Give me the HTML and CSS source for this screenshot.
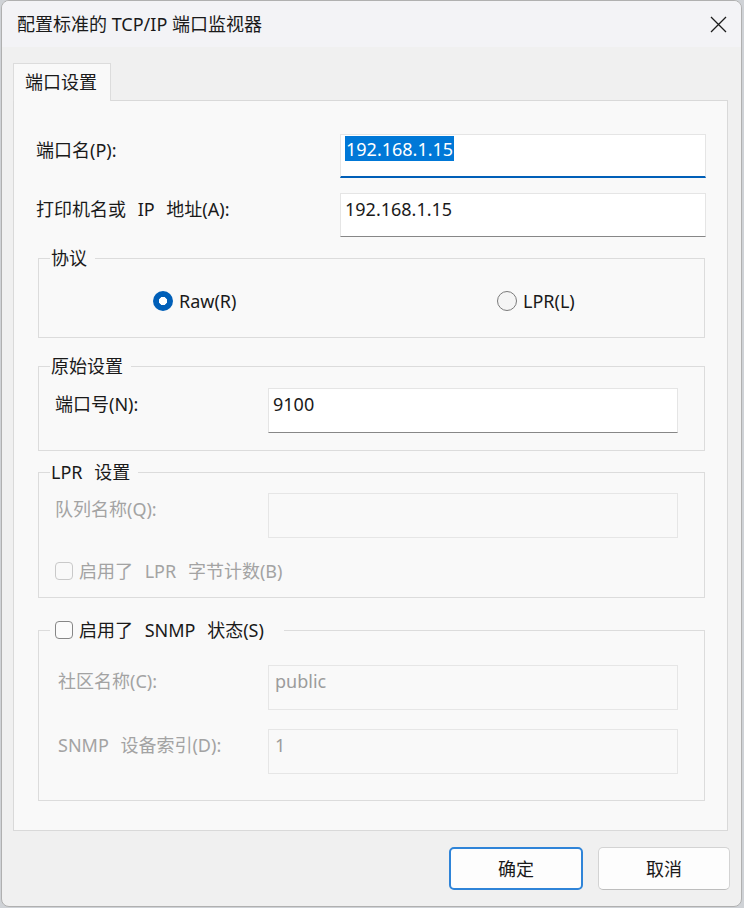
FILE: index.html
```html
<!DOCTYPE html>
<html lang="zh-CN">
<head>
<meta charset="utf-8">
<title>配置标准的 TCP/IP 端口监视器</title>
<link rel="stylesheet" href="styles.css">
</head>
<body>
<div class="window">
  <div class="titlebar">
    <span class="title">配置标准的 TCP/IP 端口监视器</span>
    <svg class="close" viewBox="0 0 17 17" aria-hidden="true">
      <path d="M1 1 L16 16 M16 1 L1 16" stroke="#1c1c1c" stroke-width="1.3" fill="none"/>
    </svg>
  </div>
  <div class="content">
    <div class="tab">端口设置</div>
    <div class="panel">
      <div class="row">
        <div class="row-label">端口名(P):</div>
        <div class="field focused"><span class="sel">192.168.1.15</span></div>
      </div>
      <div class="row row2">
        <div class="row-label">打印机名或 IP 地址(A):</div>
        <div class="field">192.168.1.15</div>
      </div>

      <fieldset class="group proto">
        <legend>协议</legend>
        <div class="radios">
          <div class="opt"><span class="radio checked"></span><span>Raw(R)</span></div>
          <div class="opt"><span class="radio"></span><span>LPR(L)</span></div>
        </div>
      </fieldset>

      <fieldset class="group raw">
        <legend>原始设置</legend>
        <div class="grow">
          <div class="glabel">端口号(N):</div>
          <div class="field">9100</div>
        </div>
      </fieldset>

      <fieldset class="group lpr">
        <legend>LPR 设置</legend>
        <div class="grow">
          <div class="glabel disabled">队列名称(Q):</div>
          <div class="field off"></div>
        </div>
        <div class="check-row disabled"><span class="box off"></span><span>启用了 LPR 字节计数(B)</span></div>
      </fieldset>

      <fieldset class="group snmp">
        <legend><span class="box"></span><span>启用了 SNMP 状态(S)</span></legend>
        <div class="grow">
          <div class="glabel disabled">社区名称(C):</div>
          <div class="field off">public</div>
        </div>
        <div class="grow second">
          <div class="glabel disabled">SNMP 设备索引(D):</div>
          <div class="field off">1</div>
        </div>
      </fieldset>
    </div>
    <div class="buttons">
      <div class="btn primary">确定</div>
      <div class="btn cancel">取消</div>
    </div>
  </div>
</div>
</body>
</html>
```
FILE: styles.css
```css
* { box-sizing: border-box; }
html, body { margin: 0; padding: 0; }
body {
  width: 744px;
  height: 908px;
  overflow: hidden;
  background: #cfd2d6;
  font-family: "Noto Sans", "Noto Sans CJK SC", sans-serif;
  font-size: 18px;
  color: #1a1a1a;
}
.window {
  margin-left: 1px;
  width: 741px;
  height: 907px;
  border: 1px solid #b0b0b0;
  border-radius: 8px;
  background: #f0f0f0;
  overflow: hidden;
  display: flex;
  flex-direction: column;
}
.titlebar {
  flex: none;
  height: 46px;
  background: #f3f3f6;
  display: flex;
  align-items: center;
  padding: 0 14px 0 15px;
}
.title { line-height: 24px; }
.close { margin-left: auto; width: 17px; height: 17px; }

.content { padding: 16px 13px 0 11px; }
.tab {
  position: relative;
  z-index: 1;
  width: 98px;
  height: 38px;
  margin-bottom: -1px;
  background: #f9f9f9;
  border: 1px solid #dcdcdc;
  border-bottom: none;
  padding-left: 11px;
  line-height: 36px;
}
.panel {
  height: 731px;
  background: #f9f9f9;
  border: 1px solid #d9d9d9;
  padding: 33px 21px 0 22px;
  word-spacing: 7px;
}
.row { display: flex; align-items: flex-start; }
.row2 { margin-top: 15px; }
.row-label { width: 304px; padding-top: 3px; line-height: 26px; }

.field {
  flex: 1;
  height: 44px;
  background: #fff;
  border: 1px solid #e5e5e5;
  border-bottom-color: #878787;
  padding: 3px 4px 0;
  line-height: 25px;
  word-spacing: 0;
}
.field.focused { border-bottom: 2px solid #005fb8; padding-top: 2px; }
.sel { background: #0078d7; color: #fff; padding: 1px 1px 0; }
.field.off {
  background: #f9f9f9;
  border-color: #e6e6e6;
  color: #9c9c9c;
  padding-left: 6px;
}

.group {
  min-width: 0;
  margin: 11px 1px 0 2px;
  border: 1px solid #dcdcdc;
  padding: 20px 26px 23px 11px;
}
.group legend { padding: 0 8px 0 1px; line-height: 20px; }

.radios { display: grid; grid-template-columns: 344px auto; padding-left: 103px; }
.opt { display: flex; align-items: center; gap: 6px; line-height: 26px; }
.radio {
  width: 20px;
  height: 20px;
  border-radius: 50%;
  border: 1.5px solid #7b7b7b;
  background: #f5f5f5;
  flex: none;
}
.radio.checked {
  border: none;
  background: radial-gradient(circle, #fff 0 3.8px, #005fb8 4.4px);
}

.group.raw { margin-top: 18px; padding: 12px 26px 17px 11px; }
.group.lpr { margin-top: 11px; padding: 11px 26px 13px 11px; }
.group.snmp { margin-top: 19px; padding: 22px 26px 26px 11px; }

.grow { display: flex; align-items: flex-start; margin-left: 5px; }
.grow .field { height: 45px; }
.glabel { width: 213px; padding-top: 3px; line-height: 26px; }
.snmp .grow { margin-left: 8px; }
.snmp .glabel { width: 210px; }
.grow.second { margin-top: 19px; }
.disabled { color: #a3a3a3; }

.check-row {
  display: flex;
  align-items: center;
  gap: 6px;
  margin: 20px 0 0 5px;
  line-height: 26px;
}
.box {
  width: 18px;
  height: 18px;
  border-radius: 4px;
  border: 1px solid #868686;
  background: #fbfbfb;
  flex: none;
}
.box.off { border-color: #c9c9c9; background: #f9f9f9; }
.snmp legend {
  display: flex;
  align-items: center;
  gap: 6px;
  padding: 0 20px 0 5px;
  line-height: 26px;
}

.buttons {
  display: flex;
  justify-content: flex-end;
  gap: 15px;
  margin: 16px -2px 0 0;
}
.btn {
  height: 43px;
  border-radius: 5px;
  background: #fdfdfd;
  border: 1px solid #d3d3d3;
  border-bottom-color: #bdbdbd;
  display: flex;
  align-items: center;
  justify-content: center;
  line-height: 24px;
}
.btn.primary { width: 134px; border: 2px solid #2f84d8; }
.btn.cancel { width: 132px; }
```
